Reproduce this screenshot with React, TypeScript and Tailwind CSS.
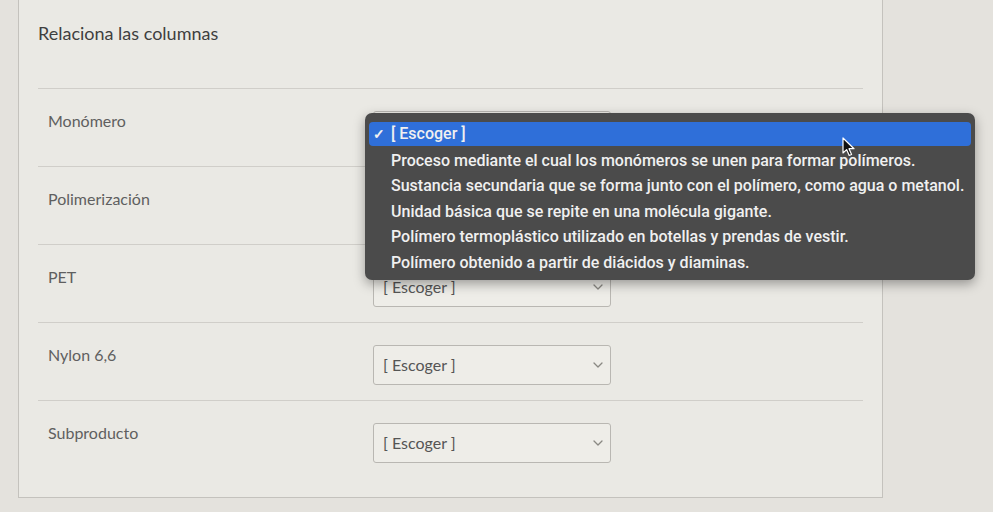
import React from "react";

const rows = ["Monómero", "Polimerización", "PET", "Nylon 6,6", "Subproducto"];

const options = [
  "Proceso mediante el cual los monómeros se unen para formar polímeros.",
  "Sustancia secundaria que se forma junto con el polímero, como agua o metanol.",
  "Unidad básica que se repite en una molécula gigante.",
  "Polímero termoplástico utilizado en botellas y prendas de vestir.",
  "Polímero obtenido a partir de diácidos y diaminas.",
];

function SelectBox() {
  return (
    <div className="flex h-[40px] w-[238px] items-center justify-between rounded-[3px] border border-[#b9b7b2] bg-[#eeede8] pl-[9px] pr-[7px] text-[16px] text-[#555]">
      <span>[ Escoger ]</span>
      <svg width="10" height="6" viewBox="0 0 10 6" fill="none">
        <path d="M1 1l4 4 4-4" stroke="#8a8883" strokeWidth="1.3" strokeLinecap="round" strokeLinejoin="round" />
      </svg>
    </div>
  );
}

function Cursor() {
  return (
    <svg width="14" height="20" viewBox="0 0 14 20" className="absolute left-[477px] top-[24px]">
      <path d="M1 1v15l3.6-3.4 2.6 5.9 2.4-1-2.6-5.8H12L1 1z" fill="#111" stroke="#fff" strokeWidth="1.2" strokeLinejoin="round" />
    </svg>
  );
}

export default function App() {
  return (
    <div className="min-h-[512px] bg-[#e4e2dd] pl-[18px] pr-[110px] font-['Lato','Noto_Sans',sans-serif]">
      <div className="relative border-x border-b border-[#c4c2bd] bg-[#eae9e4] px-[19px] pb-[19px]">
        {/* Title */}
        <div className="border-b border-[#d0cec9] pb-[43px] pt-[21px] text-[18px] leading-[24px] text-[#3f3f3f]">
          Relaciona las columnas
        </div>

        {/* Matching rows */}
        {rows.map((label, i) => (
          <div
            key={label}
            className={`flex items-start pb-[15px] pt-[22px] ${i < rows.length - 1 ? "border-b border-[#d0cec9]" : ""}`}
          >
            <div className="w-[335px] pl-[10px] text-[16px] leading-[20px] text-[#5f5f5f]">{label}</div>
            <SelectBox />
          </div>
        ))}

        {/* Open dropdown list */}
        <div className="absolute left-[346px] top-[113px] w-[610px] rounded-[7px] bg-[#4b4b4b] px-[4px] pb-[4px] pt-[9px] font-['Roboto','Liberation_Sans',Arial,sans-serif] text-[16px] font-medium text-[#f0f0f0] shadow-[0_4px_12px_rgba(0,0,0,0.35)]">
          <div className="mb-[2px] flex h-[24px] items-center rounded-[4px] bg-[#2f6fd9] pl-[4px]">
            <span className="w-[18px] text-[14px] font-bold">✓</span>
            <span>[ Escoger ]</span>
          </div>
          {options.map((opt) => (
            <div key={opt} className="flex h-[25.5px] items-center pl-[22px]">
              {opt}
            </div>
          ))}
          <Cursor />
        </div>
      </div>
    </div>
  );
}
